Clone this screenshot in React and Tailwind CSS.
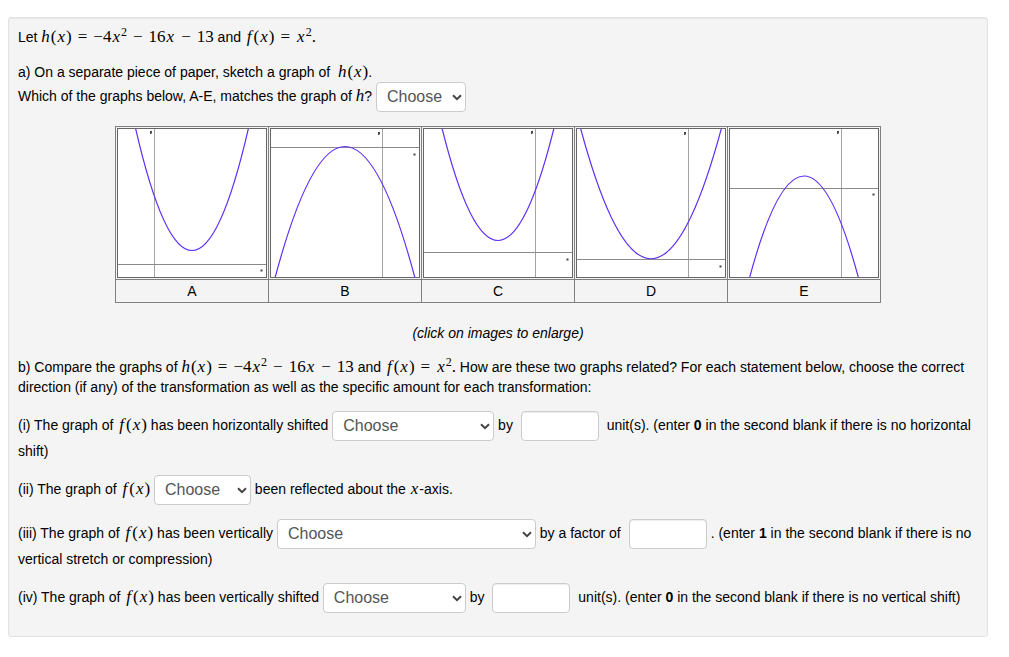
import { useState } from 'react'

// Curves are exact parabolas written as one quadratic segment each
const GRAPHS = [
  { id: 'A', axisX: 37, axisY: 136, curve: 'M18.5 0Q75 245 131.5 0', yMark: [34, 4], xMark: [144, 142] },
  { id: 'B', axisX: 112, axisY: 19, curve: 'M5 150Q75 -113 145 150', yMark: [109, 5], xMark: [144, 26] },
  { id: 'C', axisX: 112, axisY: 124, curve: 'M19 0Q75 225 131 0', yMark: [109, 4], xMark: [144, 131] },
  { id: 'D', axisX: 112, axisY: 131, curve: 'M4.5 0Q75 261.5 145.5 0', yMark: [109, 5], xMark: [144, 138] },
  { id: 'E', axisX: 112, axisY: 60, curve: 'M20.5 150Q75 -54 129.5 150', yMark: [109, 4], xMark: [144, 66] },
]

function Graph({ graph, className }) {
  const [yx, yy] = graph.yMark
  const [xx, xy] = graph.xMark
  return (
    <svg className={className} viewBox="0 0 150 150" role="img" aria-label={`Graph ${graph.id}`}>
      <rect width="150" height="150" fill="#fff" />
      <path d={`M${graph.axisX + 0.5} 0V150`} stroke="#a3a3a3" strokeWidth="1" />
      <path d={`M0 ${graph.axisY + 0.5}H150`} stroke="#8a8a8a" strokeWidth="1" />
      <path d={graph.curve} fill="none" stroke="#6030f5" strokeWidth="1.2" />
      <path d={`M${yx - 1} ${yy - 1}h2v2l-1 1h-1v-1l.5-.5h-.5z`} fill="#444" />
      <rect x={xx - 0.5} y={xy - 0.5} width="2" height="2" fill="#444" />
      <rect x="0.5" y="0.5" width="149" height="149" fill="none" stroke="#666" />
    </svg>
  )
}

function M({ children }) {
  return (
    <span className="whitespace-nowrap font-['Liberation_Serif',serif] text-[17px] leading-none">
      {children}
    </span>
  )
}

function Op({ children }) {
  return <span className="mx-[6px]">{children}</span>
}

function X() {
  return <i className="mx-px">x</i>
}

function Squared() {
  return <sup className="text-xs">2</sup>
}

function Fx() {
  return <M><i className="mx-[2px]">f</i>(<X />)</M>
}

function Hx() {
  return <M><i className="mr-px">h</i>(<X />)</M>
}

function HEquation() {
  return (
    <>
      <Hx />
      <M><Op>=</Op>−4<X /><Squared /><Op>−</Op>16<X /><Op>−</Op>13</M>
    </>
  )
}

function FEquation() {
  return (
    <>
      <Fx />
      <M><Op>=</Op><X /><Squared />.</M>
    </>
  )
}

function Choice({ id, options, className, ...props }) {
  return (
    <span className={`relative inline-block h-[30px] align-middle ${className}`}>
      <select
        id={id}
        className="block h-full w-full appearance-none rounded border border-[#ccc] bg-white pl-[10px] pr-5 text-base leading-5 text-[#555]"
        {...props}
      >
        <option>Choose</option>
        {options.map(option => <option key={option}>{option}</option>)}
      </select>
      <svg className="pointer-events-none absolute right-1 top-3 h-[7px] w-[10px]" viewBox="0 0 10 7" fill="none" stroke="#444" strokeWidth="2">
        <path d="M1 1.2l4 4 4-4" />
      </svg>
    </span>
  )
}

function Blank({ label }) {
  return (
    <input
      type="text"
      aria-label={label}
      className="mx-1 inline-block h-[30px] w-[78px] rounded border border-[#ccc] bg-white px-2 align-middle text-base text-[#555] shadow-[inset_0_1px_1px_rgba(0,0,0,0.075)]"
    />
  )
}

export default function App() {
  const [enlarged, setEnlarged] = useState(null)

  return (
    <div className="pb-5 pl-2 pr-[21px] pt-[17px] font-['Liberation_Sans',Arial,sans-serif] text-sm leading-5 text-black">
      <main className="rounded-[3px] border border-[#e3e3e3] bg-[#f4f4f4] px-[9px] pb-[23px] pt-[9px] shadow-[inset_0_1px_1px_rgba(0,0,0,0.05)]">
        <p className="mb-[15px]">
          Let <HEquation /> and <FEquation />
        </p>

        <p>a) On a separate piece of paper, sketch a graph of &nbsp;<Hx />.</p>
        <p className="mb-[14px]">
          <label htmlFor="match">
            Which of the graphs below, A-E, matches the graph of <M><i>h</i></M>?
          </label>{' '}
          <Choice id="match" className="w-[90px]" options={GRAPHS.map(g => g.id)} />
        </p>

        <table className="mx-auto mb-5 border-collapse text-center">
          <tbody>
            <tr>
              {GRAPHS.map(graph => (
                <td key={graph.id} className="border border-[#808080] p-px">
                  <button type="button" className="block cursor-pointer" onClick={() => setEnlarged(graph)}>
                    <Graph graph={graph} className="block h-[150px] w-[150px]" />
                  </button>
                </td>
              ))}
            </tr>
            <tr>
              {GRAPHS.map(graph => (
                <td key={graph.id} className="border border-[#808080] p-px">{graph.id}</td>
              ))}
            </tr>
          </tbody>
        </table>
        <p className="mb-[14px] text-center italic">(click on images to enlarge)</p>

        <p className="mb-[14px]">
          b) Compare the graphs of <HEquation /> and <FEquation /> How are these two graphs related? For each
          statement below, choose the correct direction (if any) of the transformation as well as the specific
          amount for each transformation:
        </p>

        <div className="space-y-[14px]">
          <p>
            <label htmlFor="horizontal">(i) The graph of <Fx /> has been horizontally shifted</label>{' '}
            <Choice id="horizontal" className="w-[162px]" options={['to the left', 'to the right']} /> by{' '}
            <Blank label="Horizontal shift in units" /> unit(s). (enter <b>0</b> in the second blank if there is
            no horizontal shift)
          </p>
          <p>
            <label htmlFor="reflected">(ii) The graph of <Fx /></label>{' '}
            <Choice id="reflected" className="w-[97px]" options={['has', 'has not']} /> been reflected about
            the <M><X /></M>-axis.
          </p>
          <p>
            <label htmlFor="stretch">(iii) The graph of <Fx /> has been vertically</label>{' '}
            <Choice id="stretch" className="w-[259px]" options={['stretched', 'compressed']} /> by a factor of{' '}
            <Blank label="Vertical factor" />. (enter <b>1</b> in the second blank if there is no vertical
            stretch or compression)
          </p>
          <p>
            <label htmlFor="vertical">(iv) The graph of <Fx /> has been vertically shifted</label>{' '}
            <Choice id="vertical" className="w-[143px]" options={['up', 'down']} /> by{' '}
            <Blank label="Vertical shift in units" /> unit(s). (enter <b>0</b> in the second blank if there is
            no vertical shift)
          </p>
        </div>
      </main>

      {enlarged && (
        <button
          type="button"
          aria-label="Close"
          className="fixed inset-0 flex items-center justify-center bg-black/50"
          onClick={() => setEnlarged(null)}
        >
          <Graph graph={enlarged} className="h-[450px] w-[450px]" />
        </button>
      )}
    </div>
  )
}
